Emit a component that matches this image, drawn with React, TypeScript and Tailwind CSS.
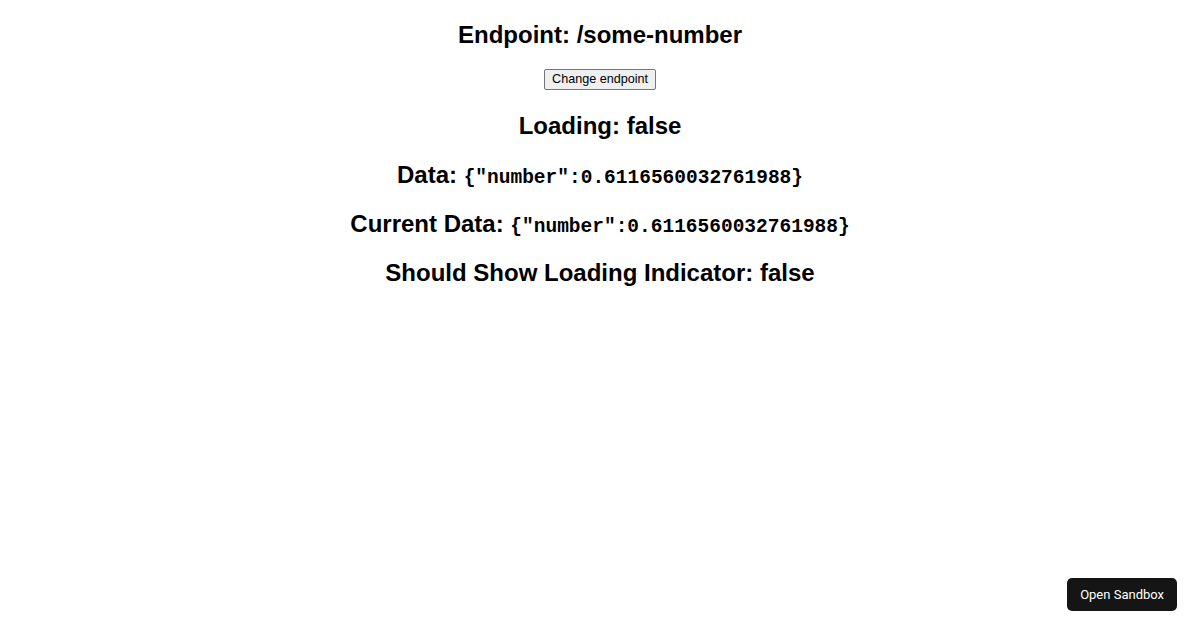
import React from "react";

const data = '{"number":0.6116560032761988}';

export default function App() {
    return (
        <div className="min-h-screen bg-white text-black text-center font-['Liberation_Sans',Arial,sans-serif]">
            <h2 className="text-[24px] font-bold leading-[28px] pt-[21px] mb-[20px]">Endpoint: /some-number</h2>
            <div className="h-[21px] flex justify-center">
                <button className="bg-[#efefef] border border-[#767676] rounded-[2px] w-[112px] h-[21px] text-[12.6px] leading-[17px] text-black">
                    Change endpoint
                </button>
            </div>
            <h2 className="text-[24px] font-bold leading-[28px] mt-[22px] mb-[21px]">Loading: false</h2>
            <h2 className="text-[24px] font-bold leading-[28px] my-[21px]">
                Data: <code className="font-['Liberation_Mono',monospace] text-[19.5px] leading-none">{data}</code>
            </h2>
            <h2 className="text-[24px] font-bold leading-[28px] my-[21px]">
                Current Data: <code className="font-['Liberation_Mono',monospace] text-[19.5px] leading-none">{data}</code>
            </h2>
            <h2 className="text-[24px] font-bold leading-[28px] my-[21px]">Should Show Loading Indicator: false</h2>

            <button className="fixed right-[23px] bottom-[19px] bg-[#151515] text-white rounded-[5px] px-[13px] h-[33px] text-[13px] font-['Roboto',sans-serif]">
                Open Sandbox
            </button>
        </div>
    );
}
